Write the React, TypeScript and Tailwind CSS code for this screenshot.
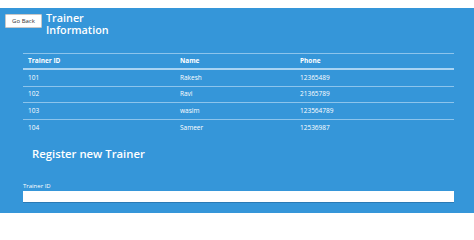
const trainers = [
  { id: '101', name: 'Rakesh', phone: '12365489' },
  { id: '102', name: 'Ravi', phone: '21365789' },
  { id: '103', name: 'wasim', phone: '123564789' },
  { id: '104', name: 'Sameer', phone: '12536987' },
];

export default function App() {
  return (
    <div className="w-[474px] h-[213px] bg-white pt-[8px] font-['Open_Sans',sans-serif] overflow-hidden">
      <div className="h-full bg-[#3596d9] text-white">
        {/* Header */}
        <div className="flex items-start gap-[4px] pl-[5px] pt-[6px]">
          <button className="h-[14px] w-[37px] bg-white border border-[#c8c8c8] rounded-[1px] text-[6px] text-[#333] leading-none">
            Go Back
          </button>
          <h1 className="text-[10.8px] font-semibold leading-[11.5px] mt-[-2px]">
            Trainer
            <br />
            Information
          </h1>
        </div>

        {/* Table */}
        <div className="mx-[23px] mt-[18px] w-[431px]">
          <div className="border-t border-[#8cc4ec] grid grid-cols-[152px_120px_1fr] h-[17px] items-center text-[6.5px] font-bold pl-[5px] border-b-2 border-b-[#a9d4f3]">
            <span>Trainer ID</span>
            <span>Name</span>
            <span>Phone</span>
          </div>
          {trainers.map((t, i) => (
            <div
              key={t.id}
              className={
                'grid grid-cols-[152px_120px_1fr] h-[16.5px] items-center text-[6.5px] pl-[5px] ' +
                (i < trainers.length - 1 ? 'border-b border-[#8cc4ec]' : '')
              }
            >
              <span>{t.id}</span>
              <span>{t.name}</span>
              <span>{t.phone}</span>
            </div>
          ))}
        </div>

        <h2 className="ml-[32px] mt-[11px] text-[11.3px] font-semibold leading-[14px]">Register new Trainer</h2>

        <div className="mx-[23px] mt-[21px] w-[431px]">
          <label className="block text-[6px] leading-[8px]">Trainer ID</label>
          <input className="block w-full h-[12px] mt-[1px] bg-white border-b border-[#2a7ab5]" />
        </div>
      </div>
    </div>
  );
}
